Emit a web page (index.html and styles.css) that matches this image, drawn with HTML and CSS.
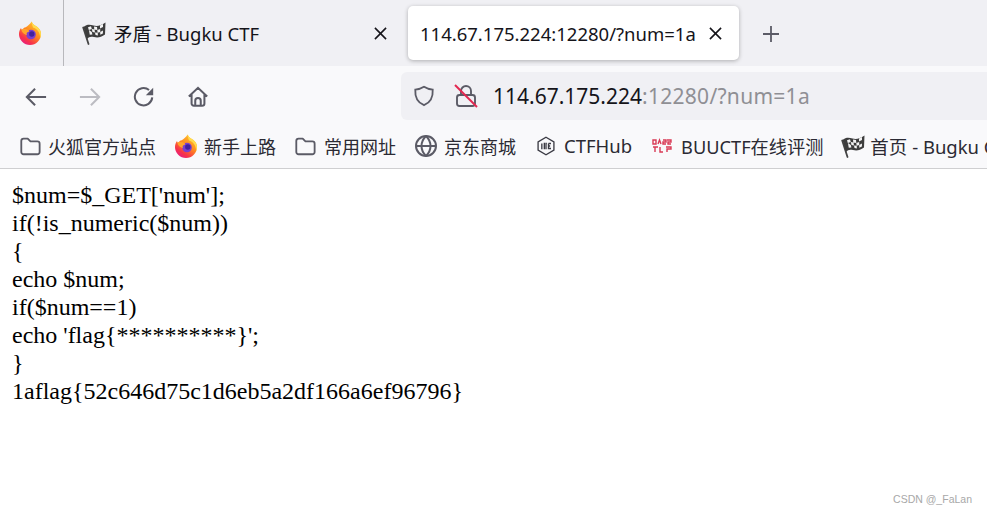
FILE: index.html
```html
<!DOCTYPE html>
<html lang="zh-CN">
<head>
<meta charset="utf-8">
<title>114.67.175.224:12280/?num=1a</title>
<link rel="stylesheet" href="styles.css">
</head>
<body>
<svg class="defs" width="0" height="0" aria-hidden="true">
  <defs>
    <linearGradient id="ffg" x1="0.8" y1="0.1" x2="0.2" y2="1">
      <stop offset="0" stop-color="#ffc02e"/><stop offset="0.4" stop-color="#ff8a1f"/><stop offset="0.75" stop-color="#f7334a"/><stop offset="1" stop-color="#e6198a"/>
    </linearGradient>
    <symbol id="firefox" viewBox="0 0 24 24">
      <path d="M13.500.5c1 2 2 3 3.500 4 3.500 2 6 4.500 6 8.500a11 11 0 1 1-22 0c0-2.500.8-4.500 2-6 .2 1 .6 1.600 1.200 2 .6-1.500 2-2.500 3.500-2.800C9.500 5 12.500 3 13.500.5z" fill="url(#ffg)"/>
      <path d="M13.500.5c1 2 2 3 3.500 4 3.500 2 6 4.500 6 8.500 0 1.500-.3 2.800-.8 4C22 11 19 7.500 15 6.500 14.500 4.500 13.500 3 13.500.5z" fill="#ffdc4e"/>
      <circle cx="13" cy="13.500" r="4.800" fill="#7a3fd0"/>
      <circle cx="13.800" cy="13" r="2.700" fill="#42229f"/>
      <path d="M3.500 8.500c2.500-.6 5-.6 6.800.6 1.200.8 1 1.700-.2 2-1.700.5-2 1.500-1 3-3-.6-5.600-2.800-5.600-5.600z" fill="#ffa52b"/>
    </symbol>
    <symbol id="flag" viewBox="0 0 24 24">
      <path d="M6.500 23L1.200 6.500" stroke="#454545" stroke-width="1.800" fill="none" stroke-linecap="round"/>
      <path d="M1.500 6C5 3 8 3.500 11.500 4.500 15.500 5.500 19 4.500 23.500 1.500L23 13.500C19 16.500 15.500 16.800 12 16 9 15.300 7 15.500 5 18z" fill="#3d3d3d"/>
      <path d="M6 6.200l3-1 .8 2.800-3 1zM12 5.500l3 .4.300 3-3-.4zM18 4.500l3-1.500v3l-3 1.500zM9.800 8l2.700.5.500 3-2.500-.5zM15.300 8.900l2.900-.9v3l-2.600.8zM6.900 9l2.900 2 .6 2.500-2.600.3zM13 11.500l2.700.3.200 2.600-2.400-.3zM18.200 11l2.800-1.400-.1 2.800-2.600 1.300z" fill="#f4f4f4"/>
    </symbol>
    <symbol id="folder" viewBox="0 0 24 24">
      <path d="M2.500 6.500A2.500 2.500 0 0 1 5 4h4.500l3 3H20a2.500 2.500 0 0 1 2.500 2.500v9A2.500 2.500 0 0 1 20 21H5a2.500 2.500 0 0 1-2.500-2.500z" fill="none" stroke="#5b5b66" stroke-width="2" stroke-linejoin="round"/>
    </symbol>
  </defs>
</svg>

<header class="chrome">
  <nav class="tabstrip">
    <div class="tab-pinned"><svg class="ico24"><use href="#firefox"/></svg></div>
    <div class="tab tab-bg">
      <svg class="ico24"><use href="#flag"/></svg>
      <span class="tab-title">矛盾 - Bugku CTF</span>
      <svg class="close" viewBox="0 0 14 14"><path d="M1 1l12 12M13 1L1 13"/></svg>
    </div>
    <div class="tab tab-active">
      <span class="tab-title">114.67.175.224:12280/?num=1a</span>
      <svg class="close" viewBox="0 0 14 14"><path d="M1 1l12 12M13 1L1 13"/></svg>
    </div>
    <svg class="plus" viewBox="0 0 18 18"><path d="M9 1v16M1 9h16"/></svg>
  </nav>

  <div class="toolbar">
    <div class="navbtns">
      <svg class="navico" viewBox="0 0 24 24"><path d="M23 12H2M11 3l-9 9 9 9"/></svg>
      <svg class="navico faded" viewBox="0 0 24 24"><path d="M1 12h21M13 3l9 9-9 9"/></svg>
      <svg class="navico" viewBox="0 0 24 24"><path d="M21 12.500A9.500 9.500 0 1 1 17.500 4.300"/><path class="solid" d="M22 2v8h-8z"/></svg>
      <svg class="navico" viewBox="0 0 24 24"><path d="M2 11.500L12 2l10 9.500M5 9v10a2.500 2.500 0 0 0 2.500 2.500h9A2.500 2.500 0 0 0 19 19V9M9 21.500V16a3 3 0 0 1 6 0v5.500"/></svg>
    </div>
    <div class="urlbar">
      <svg class="shield" viewBox="0 0 24 24"><path d="M12 2c3 2 6 2.800 9.500 3 .5 8-2 14-9.500 17C4.500 19 2 13 2.500 5 6 4.800 9 4 12 2z"/></svg>
      <svg class="lock" viewBox="0 0 24 24"><rect x="3" y="11" width="18" height="11" rx="2.500"/><path d="M7 11V7a5 5 0 0 1 10 0v4"/><path class="slash" d="M1 1l22 22"/></svg>
      <span class="url"><span class="host">114.67.175.224</span>:12280/?num=1a</span>
    </div>
  </div>

  <div class="bookmarks">
    <div class="bm"><svg class="ico22"><use href="#folder"/></svg><span>火狐官方站点</span></div>
    <div class="bm bm-ff"><svg class="ico24"><use href="#firefox"/></svg><span>新手上路</span></div>
    <div class="bm bm-folder2"><svg class="ico22"><use href="#folder"/></svg><span>常用网址</span></div>
    <div class="bm bm-globe"><svg class="ico24 globe" viewBox="0 0 24 24"><circle cx="12" cy="12" r="10"/><path d="M2 12h20M12 2c-6 6-6 14 0 20M12 2c6 6 6 14 0 20"/></svg><span>京东商城</span></div>
    <div class="bm bm-latin"><svg class="ico20 hub" viewBox="0 0 24 24"><path d="M12 1.500l9.500 5.500v10l-9.500 5.500L2.500 17V7z"/><path d="M7 9v7M10 8v8M13 9h-1v7M15 9h3M15 9v6h3M15 12h2"/></svg><span>CTFHub</span></div>
    <div class="bm bm-buu"><svg class="ico20 buu" viewBox="0 0 20 14"><path d="M1 1h3v4H1zM6 5l1.500-4L9 5M11 1h3v2h-3v2h3M15 1h4v2h-3v2h3M1 8h5M3 8v5M8 8v5h3M14 8h5v2h-4v3"/></svg><span>BUUCTF在线评测</span></div>
    <div class="bm bm-flag"><svg class="ico24"><use href="#flag"/></svg><span>首页 - Bugku CTF</span></div>
  </div>
</header>

<main class="page">
$num=$_GET['num'];<br>
if(!is_numeric($num))<br>
{<br>
echo $num;<br>
if($num==1)<br>
echo 'flag{**********}';<br>
}<br>
1aflag{52c646d75c1d6eb5a2df166a6ef96796}
</main>

<div class="watermark">CSDN @_FaLan</div>
</body>
</html>
```
FILE: styles.css
```css
html, body {
  margin: 0;
  padding: 0;
  height: 100%;
  overflow: hidden;
  background: #fff;
}
.defs { position: absolute; }
.chrome {
  font-family: "Noto Sans", "Noto Sans CJK SC", sans-serif;
  color: #15141a;
}
.tabstrip {
  display: flex;
  align-items: center;
  height: 66px;
  background: #f0f0f4;
}
.tab-pinned {
  width: 64px;
  height: 66px;
  box-sizing: border-box;
  border-right: 1px solid #b8b8bc;
  padding-left: 18px;
  display: flex;
  align-items: center;
  flex: none;
}
.ico22 { width: 22px; height: 22px; flex: none; }
.ico24 { width: 24px; height: 24px; flex: none; }
.ico20 { width: 20px; height: 20px; flex: none; }
.tab {
  display: flex;
  align-items: center;
  box-sizing: border-box;
  flex: none;
}
.tab-title {
  font-size: 18.500px;
  white-space: nowrap;
}
.tab-bg {
  width: 344px;
  height: 54px;
  padding: 0 21px 0 18px;
  gap: 8px;
}
.tab-bg .close { margin-left: auto; }
.tab-active {
  width: 331px;
  height: 54px;
  padding: 0 17px 0 12px;
  background: #fff;
  border-radius: 5px;
  box-shadow: 0 1px 4px rgba(0, 0, 0, 0.28);
}
.tab-active .close { margin-left: auto; }
.close {
  width: 13px;
  height: 13px;
  stroke: #15141a;
  stroke-width: 1.700;
  fill: none;
  flex: none;
}
.plus {
  width: 18px;
  height: 18px;
  margin: 2px 0 0 23px;
  stroke: #5b5b66;
  stroke-width: 1.800;
  fill: none;
}
.toolbar {
  display: flex;
  align-items: center;
  height: 59px;
  background: #f9f9fb;
}
.navbtns {
  display: flex;
  align-items: center;
  gap: 32px;
  width: 401px;
  padding: 2px 0 0 25px;
  box-sizing: border-box;
  flex: none;
}
.navico {
  width: 22px;
  height: 22px;
  fill: none;
  stroke: #5b5b66;
  stroke-width: 2.200;
  flex: none;
}
.navico.faded { stroke: #bcbcc2; }
.navico .solid { fill: #5b5b66; stroke: none; }
.urlbar {
  flex: 1;
  height: 48px;
  margin-top: 1px;
  background: #f0f0f4;
  border-radius: 6px 0 0 6px;
  display: flex;
  align-items: center;
  padding-left: 12px;
  box-sizing: border-box;
}
.shield {
  width: 22px;
  height: 24px;
  fill: none;
  stroke: #5b5b66;
  stroke-width: 2;
  flex: none;
}
.lock {
  width: 24px;
  height: 24px;
  margin-left: 19px;
  fill: none;
  stroke: #5b5b66;
  stroke-width: 1.900;
  flex: none;
}
.lock .slash { stroke: #e22850; }
.url {
  margin-left: 15px;
  font-size: 21px;
  color: #8f8f94;
  letter-spacing: 0.28px;
  white-space: nowrap;
}
.host { color: #15141a; letter-spacing: 0; }
.bookmarks {
  display: flex;
  align-items: center;
  height: 44px;
  box-sizing: border-box;
  padding: 0 0 2px 19px;
  gap: 18px;
  background: #f9f9fb;
  border-bottom: 1px solid #cfcfd1;
  overflow: hidden;
  white-space: nowrap;
  font-size: 18px;
}
.bm {
  display: flex;
  align-items: center;
  gap: 7px;
  flex: none;
  color: #2b2a33;
}
.bm-ff { gap: 6px; }
.bm-folder2 { gap: 8px; }
.bm-globe { gap: 6px; }
.bm-latin { font-size: 18.500px; gap: 8px; margin-left: 2px; }
.bm-buu { gap: 9px; margin-left: 2px; }
.bm-buu span { font-size: 18.200px; }
.bm-flag { gap: 5px; }
.bm-flag span { font-size: 18.500px; }
.globe, .hub {
  fill: none;
  stroke: #5b5b66;
  stroke-width: 2;
}
.hub { stroke-width: 1.600; stroke: #3b3b44; }
.buu {
  fill: none;
  stroke: #d93a55;
  stroke-width: 1.400;
}
.page {
  padding: 12px 12px 0;
  font-family: "Liberation Serif", serif;
  font-size: 24px;
  line-height: 28px;
  color: #000;
}
.watermark {
  position: absolute;
  right: 15px;
  bottom: 9px;
  font-family: "Liberation Sans", sans-serif;
  font-size: 10.500px;
  color: #a8a8a8;
}
```
